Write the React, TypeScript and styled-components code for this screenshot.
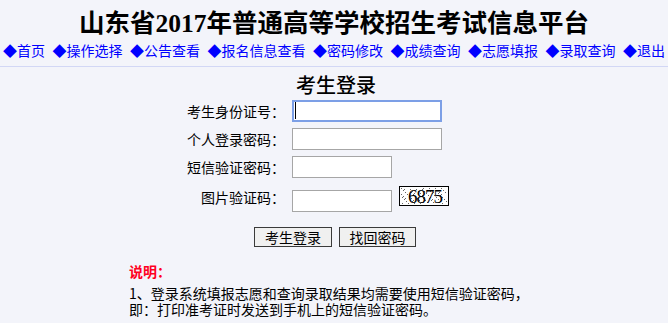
import styled, { createGlobalStyle } from "styled-components";

const GlobalStyle = createGlobalStyle`
  html, body {
    margin: 0;
    padding: 0;
    background: #f3f4fa;
  }
  body {
    font-family: "Noto Sans CJK SC", "Liberation Sans", sans-serif;
    color: #000;
  }
`;

const navItems = [
  "首页",
  "操作选择",
  "公告查看",
  "报名信息查看",
  "密码修改",
  "成绩查询",
  "志愿填报",
  "录取查询",
  "退出",
];

const fields = [
  { label: "考生身份证号：", width: 150, focused: true },
  { label: "个人登录密码：", width: 150 },
  { label: "短信验证密码：", width: 100 },
];

// scattered noise for the captcha picture
const noise = Array.from({ length: 70 }, (_, i) => ({
  x: 2 + ((i * 37) % 46),
  y: 2 + ((i * 53) % 16),
}));

export default function App() {
  return (
    <Page>
      <GlobalStyle />
      <Title>山东省2017年普通高等学校招生考试信息平台</Title>
      <Nav>
        {navItems.map((item) => (
          <NavLink key={item} href="#">
            ◆{item}
          </NavLink>
        ))}
      </Nav>

      <Heading>考生登录</Heading>

      <Form>
        {fields.map((f) => (
          <Row key={f.label} $height={28}>
            <Label>{f.label}</Label>
            <Field>
              <InputWrap>
                <Input type="text" $width={f.width} $focused={f.focused} />
                {f.focused && <Caret />}
              </InputWrap>
            </Field>
          </Row>
        ))}
        <Row $height={32}>
          <Label>图片验证码：</Label>
          <Field $padTop={4}>
            <Input type="text" $width={100} />
            <Captcha width="50" height="20" viewBox="0 0 50 20">
              <rect x="0.5" y="0.5" width="49" height="19" fill="#fff" stroke="#000" />
              {noise.map((p, i) => (
                <rect key={i} x={p.x} y={p.y} width="1" height="1" fill="#666" />
              ))}
              <text
                x="26"
                y="16.5"
                textAnchor="middle"
                fontFamily="Liberation Serif, serif"
                fontSize="19"
                fill="#000"
                letterSpacing="-1"
              >
                6875
              </text>
            </Captcha>
          </Field>
        </Row>
      </Form>

      <Buttons>
        <Button $width={78}>考生登录</Button>
        <Button $width={77}>找回密码</Button>
      </Buttons>

      <Notes>
        <NotesTitle>说明：</NotesTitle>
        <NotesLine>1、登录系统填报志愿和查询录取结果均需要使用短信验证密码，</NotesLine>
        <NotesLine>即：打印准考证时发送到手机上的短信验证密码。</NotesLine>
      </Notes>
    </Page>
  );
}

const Page = styled.div`
  width: 668px;
  height: 323px;
  overflow: hidden;
`;

const Title = styled.h1`
  margin: 0;
  padding-top: 9px;
  height: 30px;
  line-height: 30px;
  text-align: center;
  font-family: "Liberation Serif", "Noto Sans CJK SC", serif;
  font-size: 25.5px;
  font-weight: bold;
  white-space: nowrap;
`;

const Nav = styled.nav`
  margin-top: 1px;
  height: 20px;
  padding-bottom: 6px;
  border-bottom: 1px solid #d2d7f5;
  display: flex;
  justify-content: center;
  gap: 7.5px;
  white-space: nowrap;
`;

const NavLink = styled.a`
  color: #0000ff;
  text-decoration: none;
  font-size: 14px;
  line-height: 20px;
`;

const Heading = styled.h2`
  margin: 6px 0 0;
  height: 24px;
  line-height: 24px;
  text-align: center;
  font-size: 20px;
  font-weight: 500;
  padding-left: 4px;
`;

const Form = styled.div`
  display: flex;
  flex-direction: column;
  margin-left: 165px;
`;

const Row = styled.div<{ $height: number }>`
  display: flex;
  align-items: center;
  gap: 7px;
  height: ${(p) => p.$height}px;
`;

const Label = styled.span`
  width: 120px;
  text-align: right;
  font-size: 14px;
  line-height: 16px;
  white-space: nowrap;
`;

const Field = styled.div<{ $padTop?: number }>`
  display: flex;
  align-items: flex-end;
  gap: 7px;
  padding-top: ${(p) => p.$padTop ?? 0}px;
`;

const InputWrap = styled.div`
  position: relative;
  display: flex;
`;

const Input = styled.input<{ $width: number; $focused?: boolean }>`
  box-sizing: border-box;
  width: ${(p) => p.$width}px;
  height: 22px;
  margin: 0;
  padding: 0 3px;
  background: #fff;
  border: ${(p) => (p.$focused ? "2px solid #7c9fe6" : "1px solid #a6a6a6")};
  outline: none;
  font-size: 14px;
`;

const Caret = styled.span`
  position: absolute;
  left: 3px;
  top: 2px;
  width: 1px;
  height: 17px;
  background: #000;
`;

const Captcha = styled.svg`
  display: block;
  margin-bottom: 6px;
`;

const Buttons = styled.div`
  margin-top: 14px;
  display: flex;
  justify-content: center;
  gap: 7px;
  padding-left: 2px;
`;

const Button = styled.button<{ $width: number }>`
  box-sizing: border-box;
  width: ${(p) => p.$width}px;
  height: 20px;
  padding: 0;
  background: #f0f0f0;
  border: 1px solid #3a3a3a;
  border-radius: 0;
  font-family: "Noto Sans CJK SC", sans-serif;
  font-size: 14px;
  line-height: 18px;
  color: #000;
`;

const Notes = styled.div`
  width: 410px;
  margin: 16px auto 0;
`;

const NotesTitle = styled.div`
  color: #ff0022;
  font-weight: bold;
  font-size: 14px;
  line-height: 16px;
  margin-bottom: 6px;
`;

const NotesLine = styled.div`
  font-size: 14px;
  line-height: 16px;
  white-space: nowrap;
`;
